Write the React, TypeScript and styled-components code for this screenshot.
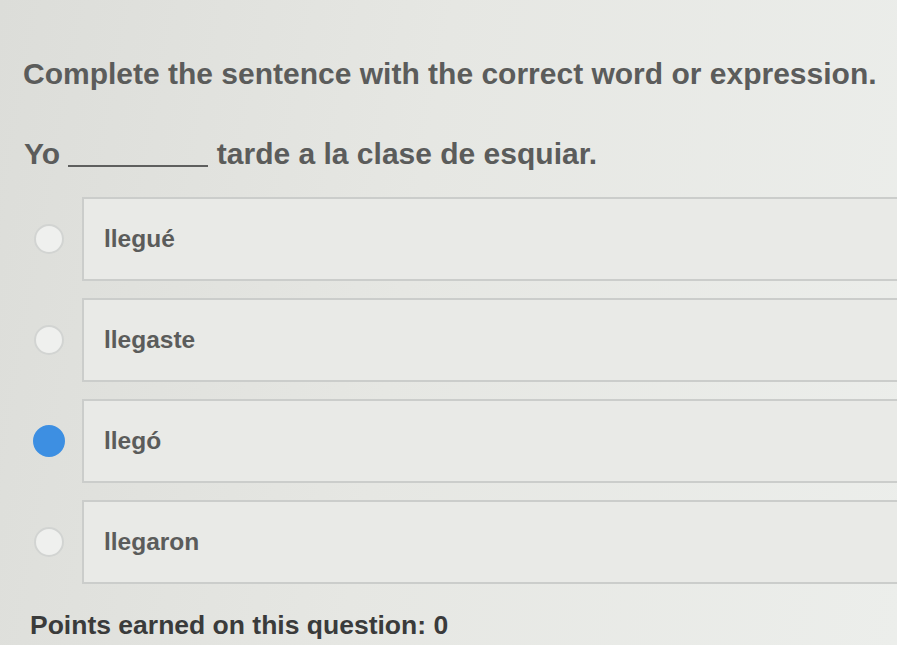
import React, { useState } from "react";
import styled, { createGlobalStyle } from "styled-components";

const GlobalStyle = createGlobalStyle`
  html, body {
    margin: 0;
    padding: 0;
  }
  body {
    background: linear-gradient(100deg, #dcddd9 0%, #e6e7e3 45%, #eceeeb 100%);
    font-family: "Liberation Sans", Arial, sans-serif;
    overflow: hidden;
  }
`;

const Page = styled.div`
  width: 897px;
  height: 645px;
  padding: 57px 0 0 23px;
  box-sizing: border-box;
  overflow: hidden;
`;

const Prompt = styled.h2`
  margin: 0;
  font-size: 30px;
  line-height: 34px;
  font-weight: 700;
  color: #5b5c5b;
  white-space: nowrap;
`;

const Sentence = styled.p`
  margin: 46px 0 0 1px;
  font-size: 30px;
  line-height: 34px;
  font-weight: 700;
  color: #5b5c5b;
  white-space: nowrap;
`;

const Blank = styled.span`
  display: inline-block;
  width: 140px;
  height: 2px;
  border-bottom: 2px solid #5e5f5e;
  margin-bottom: -3px;
`;

const Options = styled.ul`
  list-style: none;
  margin: 26px 0 0;
  padding: 0;
  display: flex;
  flex-direction: column;
  gap: 17px;
`;

const Row = styled.li`
  display: flex;
  align-items: center;
  gap: 18px;
  cursor: pointer;
`;

const Radio = styled.span<{ $checked: boolean }>`
  flex: none;
  width: ${(p) => (p.$checked ? "32px" : "30px")};
  height: ${(p) => (p.$checked ? "32px" : "30px")};
  margin-left: ${(p) => (p.$checked ? "10px" : "11px")};
  margin-right: ${(p) => (p.$checked ? "-1px" : "0")};
  border-radius: 50%;
  box-sizing: border-box;
  background: ${(p) => (p.$checked ? "#3d8fe2" : "#eff0ee")};
  border: 2px solid ${(p) => (p.$checked ? "#3d8fe2" : "#d2d4d2")};
`;

const Choice = styled.div`
  flex: none;
  width: 860px;
  height: 84px;
  box-sizing: border-box;
  display: flex;
  align-items: center;
  padding-left: 20px;
  background: #e9eae7;
  border: 2px solid #cbcdcb;
  border-right: none;
  font-size: 24.5px;
  font-weight: 700;
  color: #5b5c5b;
`;

const Score = styled.div`
  margin: 26px 0 0 7px;
  font-size: 26.5px;
  line-height: 30px;
  font-weight: 700;
  color: #3a3b3b;
  white-space: nowrap;
`;

const answers = ["llegué", "llegaste", "llegó", "llegaron"];

export default function App() {
  const [selected, setSelected] = useState(2);

  return (
    <>
      <GlobalStyle />
      <Page>
        <Prompt>Complete the sentence with the correct word or expression.</Prompt>
        <Sentence>
          Yo <Blank /> tarde a la clase de esquiar.
        </Sentence>
        <Options>
          {answers.map((a, i) => (
            <Row key={a} onClick={() => setSelected(i)}>
              <Radio $checked={selected === i} />
              <Choice>{a}</Choice>
            </Row>
          ))}
        </Options>
        <Score>Points earned on this question: 0</Score>
      </Page>
    </>
  );
}
